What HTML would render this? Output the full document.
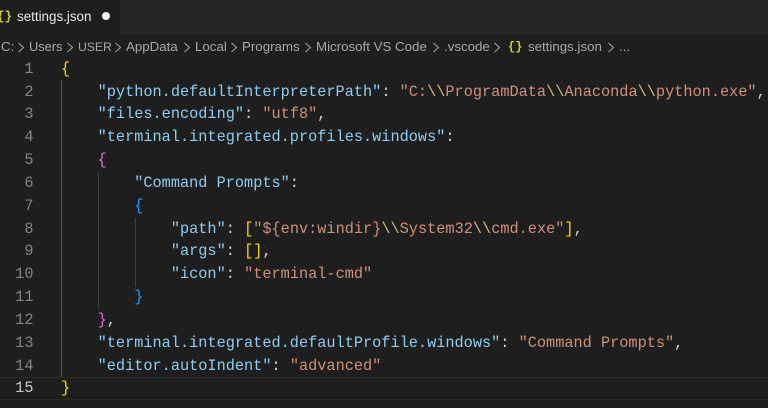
<!DOCTYPE html>
<html><head><meta charset="utf-8"><style>
html,body{margin:0;padding:0;width:768px;height:408px;overflow:hidden;background:#1e1e1e}
body{font-family:"Liberation Sans",sans-serif}
#w{position:absolute;left:0;top:0;width:768px;height:408px;background:#1e1e1e;overflow:hidden;filter:blur(.35px)}
.tabs{position:absolute;left:0;top:0;width:768px;height:35px;background:#252526}
.tab{position:absolute;left:0;top:0;width:120px;height:35px;background:#1e1e1e}
.t{position:absolute;white-space:nowrap}
.bc{position:absolute;top:36px;left:0;height:22px;font-size:13.3px;line-height:22px;color:#a9a9a9;white-space:nowrap}
.bc span{position:absolute;top:0;white-space:nowrap}
.bc svg{position:absolute;top:6px;width:8px;height:11px}
.ln{position:absolute;left:0;width:33.5px;text-align:right;font:15.27px/23px "Liberation Mono",monospace;color:#858585}
.c{position:absolute;left:61px;font:15.25px/23px "Liberation Mono",monospace;color:#d4d4d4;white-space:pre}
.k{color:#8fcdf0}.s{color:#ce9178}.e{color:#d7ba7d}.y{color:#ffd700}.p{color:#da70d6}.b{color:#179fff}
.g{position:absolute;width:1px;background:#404040}
</style></head><body><div id="w">
<div class="tabs"><div class="tab"></div></div>
<div class="t" style="left:-3px;top:7px;font:bold 12.5px/20px 'Liberation Mono',monospace;color:#cbcb41">{}</div>
<div class="t" style="left:17px;top:7px;font-size:13.4px;line-height:20px;color:#e6e6e6">settings.json</div>
<div class="t" style="left:102px;top:12px;width:8px;height:8px;border-radius:50%;background:#f4f4f4"></div>
<div class="bc">
<span style="left:1px">C:</span>
<svg style="left:17px" viewBox="0 0 8 11"><path d="M1.5 1 L6.5 5.5 L1.5 10" fill="none" stroke="#a9a9a9" stroke-width="1"/></svg>
<span style="left:29px;font-size:12.8px">Users</span>
<svg style="left:66px" viewBox="0 0 8 11"><path d="M1.5 1 L6.5 5.5 L1.5 10" fill="none" stroke="#a9a9a9" stroke-width="1"/></svg>
<span style="left:78px;font-size:12.2px">USER</span>
<svg style="left:114px" viewBox="0 0 8 11"><path d="M1.5 1 L6.5 5.5 L1.5 10" fill="none" stroke="#a9a9a9" stroke-width="1"/></svg>
<span style="left:126px">AppData</span>
<svg style="left:183px" viewBox="0 0 8 11"><path d="M1.5 1 L6.5 5.5 L1.5 10" fill="none" stroke="#a9a9a9" stroke-width="1"/></svg>
<span style="left:195px">Local</span>
<svg style="left:230px" viewBox="0 0 8 11"><path d="M1.5 1 L6.5 5.5 L1.5 10" fill="none" stroke="#a9a9a9" stroke-width="1"/></svg>
<span style="left:242px">Programs</span>
<svg style="left:304px" viewBox="0 0 8 11"><path d="M1.5 1 L6.5 5.5 L1.5 10" fill="none" stroke="#a9a9a9" stroke-width="1"/></svg>
<span style="left:316px">Microsoft VS Code</span>
<svg style="left:432px" viewBox="0 0 8 11"><path d="M1.5 1 L6.5 5.5 L1.5 10" fill="none" stroke="#a9a9a9" stroke-width="1"/></svg>
<span style="left:444px">.vscode</span>
<svg style="left:493px" viewBox="0 0 8 11"><path d="M1.5 1 L6.5 5.5 L1.5 10" fill="none" stroke="#a9a9a9" stroke-width="1"/></svg>
<span style="left:508px;font:bold 12px/22px 'Liberation Mono',monospace;color:#cbcb41">{}</span>
<span style="left:528px">settings.json</span>
<svg style="left:607px" viewBox="0 0 8 11"><path d="M1.5 1 L6.5 5.5 L1.5 10" fill="none" stroke="#a9a9a9" stroke-width="1"/></svg>
<span style="left:619px">...</span>
</div>
<div class="g" style="left:61px;top:80px;height:297px;background:#585858"></div>
<div class="g" style="left:98px;top:172px;height:137px"></div>
<div class="g" style="left:135px;top:218px;height:69px"></div>
<div style="position:absolute;left:0;top:377px;width:768px;height:23px;box-sizing:border-box;border-top:1px solid #282828;border-bottom:1px solid #282828"></div>
<div class="ln" style="top:58px">1</div>
<div class="ln" style="top:81px">2</div>
<div class="ln" style="top:103px">3</div>
<div class="ln" style="top:126px">4</div>
<div class="ln" style="top:149px">5</div>
<div class="ln" style="top:172px">6</div>
<div class="ln" style="top:195px">7</div>
<div class="ln" style="top:218px">8</div>
<div class="ln" style="top:240px">9</div>
<div class="ln" style="top:263px">10</div>
<div class="ln" style="top:286px">11</div>
<div class="ln" style="top:309px">12</div>
<div class="ln" style="top:332px">13</div>
<div class="ln" style="top:355px">14</div>
<div class="ln" style="top:377px;color:#c6c6c6">15</div>
<div class="c" style="top:58px"><span class="y">{</span></div>
<div class="c" style="top:81px">    <span class="k">"python.defaultInterpreterPath"</span>: <span class="s">"C:<span class="e">\\</span>ProgramData<span class="e">\\</span>Anaconda<span class="e">\\</span>python.exe"</span>,</div>
<div class="c" style="top:103px">    <span class="k">"files.encoding"</span>: <span class="s">"utf8"</span>,</div>
<div class="c" style="top:126px">    <span class="k">"terminal.integrated.profiles.windows"</span>:</div>
<div class="c" style="top:149px">    <span class="p">{</span></div>
<div class="c" style="top:172px">        <span class="k">"Command Prompts"</span>:</div>
<div class="c" style="top:195px">        <span class="b">{</span></div>
<div class="c" style="top:218px">            <span class="k">"path"</span>: <span class="y">[</span><span class="s">"${env:windir}<span class="e">\\</span>System32<span class="e">\\</span>cmd.exe"</span><span class="y">]</span>,</div>
<div class="c" style="top:240px">            <span class="k">"args"</span>: <span class="y">[]</span>,</div>
<div class="c" style="top:263px">            <span class="k">"icon"</span>: <span class="s">"terminal-cmd"</span></div>
<div class="c" style="top:286px">        <span class="b">}</span></div>
<div class="c" style="top:309px">    <span class="p">}</span>,</div>
<div class="c" style="top:332px">    <span class="k">"terminal.integrated.defaultProfile.windows"</span>: <span class="s">"Command Prompts"</span>,</div>
<div class="c" style="top:355px">    <span class="k">"editor.autoIndent"</span>: <span class="s">"advanced"</span></div>
<div class="c" style="top:377px"><span class="y">}</span></div>
</div></body></html>
